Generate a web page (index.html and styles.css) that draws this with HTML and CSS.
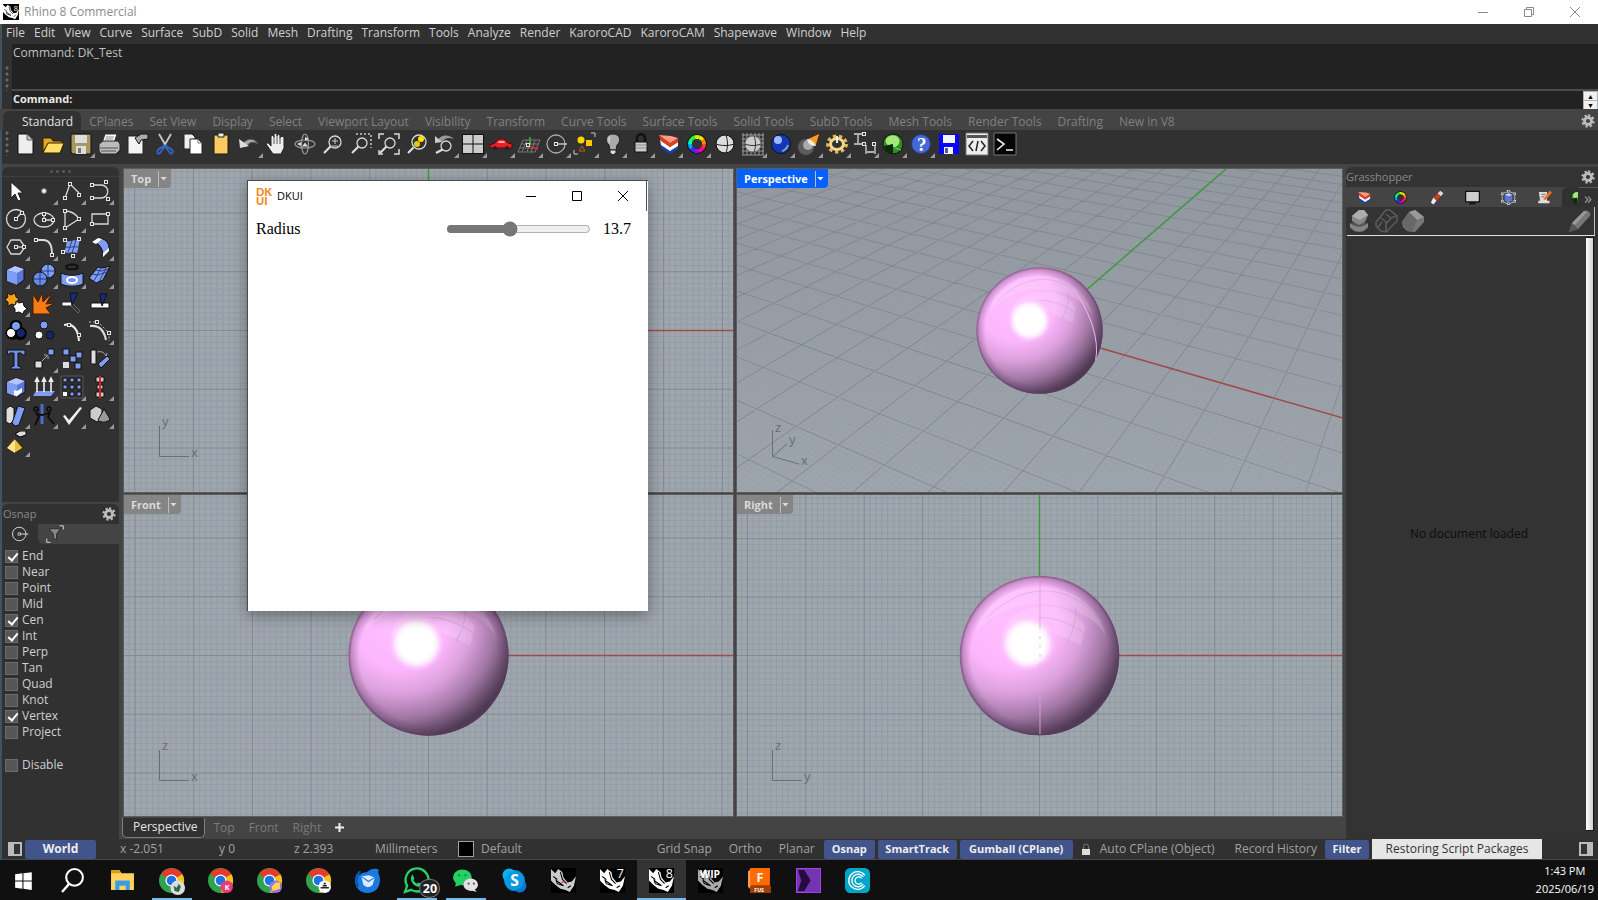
FILE: index.html
```html
<!DOCTYPE html>
<html lang="en">
<head>
    <meta charset="UTF-8">
    <meta name="viewport" content="width=device-width, initial-scale=1.0">
    <title>Rhino 8 Commercial</title>
    <link rel="stylesheet" href="styles.css">
</head>
<body>
    <header class="titlebar">
        <span class="app-icon" data-icon="rhino8"></span>
        <h1>Rhino 8 Commercial</h1>
        <div class="window-buttons">
            <button aria-label="Minimize"><svg width="12" height="12"><path d="M1 6.500h10"/></svg></button>
            <button aria-label="Restore"><svg width="12" height="12"><path d="M1.500 3.500h7v7h-7zM3.500 3.500v-2h7v7h-2"/></svg></button>
            <button aria-label="Close"><svg width="12" height="12"><path d="M1 1l10 10M11 1L1 11"/></svg></button>
        </div>
    </header>

    <nav class="menubar">
        <a href="#">File</a><a href="#">Edit</a><a href="#">View</a><a href="#">Curve</a><a href="#">Surface</a><a href="#">SubD</a><a href="#">Solid</a><a href="#">Mesh</a><a href="#">Drafting</a><a href="#">Transform</a><a href="#">Tools</a><a href="#">Analyze</a><a href="#">Render</a><a href="#">KaroroCAD</a><a href="#">KaroroCAM</a><a href="#">Shapewave</a><a href="#">Window</a><a href="#">Help</a>
    </nav>

    <section class="command">
        <div class="grip"></div>
        <div class="command-body">
            <div class="history">Command: DK_Test</div>
            <div class="prompt">
                <label for="command-input">Command:</label>
                <input type="text" id="command-input">
                <div class="spinner">
                    <button aria-label="Previous">&#9650;</button>
                    <button aria-label="Next">&#9660;</button>
                </div>
            </div>
        </div>
    </section>

    <section class="toolbars">
        <div class="toolbar-tabs">
            <a href="#" class="active">Standard</a><a href="#">CPlanes</a><a href="#">Set View</a><a href="#">Display</a><a href="#">Select</a><a href="#">Viewport Layout</a><a href="#">Visibility</a><a href="#">Transform</a><a href="#">Curve Tools</a><a href="#">Surface Tools</a><a href="#">Solid Tools</a><a href="#">SubD Tools</a><a href="#">Mesh Tools</a><a href="#">Render Tools</a><a href="#">Drafting</a><a href="#">New in V8</a>
            <button class="gear" aria-label="Toolbar options" data-icon="gear"></button>
        </div>
        <div class="toolbar">
            <div class="grip"></div>
            <div class="toolbar-icons" id="toolbar"></div>
        </div>
    </section>

    <main>
        <aside class="left-dock">
            <section class="panel tools">
                <div class="hgrip"><i></i><i></i><i></i><i></i></div>
                <div class="tool-grid" id="tools"></div>
            </section>
            <section class="panel osnap">
                <div class="panel-header">
                    <h2>Osnap</h2>
                    <button class="gear" aria-label="Osnap options" data-icon="gear"></button>
                </div>
                <div class="osnap-tabs">
                    <button class="active" aria-label="Object snaps" data-icon="osnap"></button>
                    <button aria-label="Selection filter" data-icon="filter"></button>
                </div>
                <div class="osnap-list">
                    <label><input type="checkbox" checked>End</label>
                    <label><input type="checkbox">Near</label>
                    <label><input type="checkbox">Point</label>
                    <label><input type="checkbox">Mid</label>
                    <label><input type="checkbox" checked>Cen</label>
                    <label><input type="checkbox" checked>Int</label>
                    <label><input type="checkbox">Perp</label>
                    <label><input type="checkbox">Tan</label>
                    <label><input type="checkbox">Quad</label>
                    <label><input type="checkbox">Knot</label>
                    <label><input type="checkbox" checked>Vertex</label>
                    <label><input type="checkbox">Project</label>
                    <label class="disable"><input type="checkbox">Disable</label>
                </div>
            </section>
        </aside>

        <section class="workspace">
            <div class="viewports">
                <div class="viewport" data-view="top" data-axes="xy"><button class="view-title">Top<i></i></button></div>
                <div class="viewport" data-view="perspective" data-axes="3d"><button class="view-title active">Perspective<i></i></button></div>
                <div class="viewport" data-view="front" data-axes="xz"><button class="view-title">Front<i></i></button></div>
                <div class="viewport" data-view="right" data-axes="yz"><button class="view-title">Right<i></i></button></div>
            </div>
            <nav class="view-tabs">
                <a href="#" class="active">Perspective</a><a href="#">Top</a><a href="#">Front</a><a href="#">Right</a>
                <button aria-label="New viewport"><svg width="9" height="9"><path d="M4.500 0v9M0 4.500h9" stroke="#eee" stroke-width="2"/></svg></button>
            </nav>
        </section>

        <aside class="right-dock">
            <div class="panel-header">
                <h2>Grasshopper</h2>
                <button class="gear" aria-label="Panel options" data-icon="gear"></button>
            </div>
            <div class="panel-tabs" id="panel-tabs"></div>
            <div class="gh-toolbar">
                <button aria-label="Bake" data-icon="ghBake"></button>
                <button aria-label="Wireframe" data-icon="ghWire"></button>
                <button aria-label="Shaded" data-icon="ghShade"></button>
                <button class="pencil" aria-label="Edit" data-icon="pencil"></button>
            </div>
            <div class="gh-body">
                <p>No document loaded</p>
                <div class="scrollbar"></div>
            </div>
        </aside>
    </main>

    <footer class="statusbar">
        <button class="side" aria-label="Left sidebar"><svg width="14" height="14"><path fill="#bbb" d="M0 0h14v14H0z"/><path fill="#333" d="M6 2h6v10H6z"/></svg></button>
        <button class="on world">World</button>
        <div class="coords"><span>x -2.051</span><span>y 0</span><span>z 2.393</span><span>Millimeters</span></div>
        <button class="layer"><i></i>Default</button>
        <div class="modes">
            <button>Grid Snap</button>
            <button>Ortho</button>
            <button>Planar</button>
            <button class="on osnap-mode">Osnap</button>
            <button class="on smart-mode">SmartTrack</button>
            <button class="on gumball-mode">Gumball (CPlane)</button>
            <svg class="lock" width="10" height="13"><path d="M2.500 6V3.500a2.500 2.500 0 0 1 5 0V6" fill="none" stroke="#777"/><path d="M1 6h8v6H1z" fill="#ddd"/></svg>
            <button class="cplane-mode">Auto CPlane (Object)</button>
            <button class="history-mode">Record History</button>
            <button class="on filter-mode">Filter</button>
            <button class="progress">Restoring Script Packages</button>
            <button class="side" aria-label="Right sidebar"><svg width="14" height="14"><path fill="#bbb" d="M0 0h14v14H0z"/><path fill="#333" d="M2 2h6v10H2z"/></svg></button>
        </div>
    </footer>

    <footer class="taskbar">
        <div class="task-icons" id="taskbar"></div>
        <div class="clock"><span>1:43 PM</span><span>2025/06/19</span></div>
    </footer>

    <section class="dialog">
        <div class="dialog-title">
            <div class="dk-logo"><span>DK</span><span>UI</span></div>
            <h2>DKUI</h2>
            <div class="window-buttons">
                <button aria-label="Minimize"><svg width="12" height="12"><path d="M1 6.500h10"/></svg></button>
                <button aria-label="Maximize"><svg width="12" height="12"><path d="M1.500 1.500h9v9h-9z"/></svg></button>
                <button aria-label="Close"><svg width="12" height="12"><path d="M1 1l10 10M11 1L1 11"/></svg></button>
            </div>
        </div>
        <div class="dialog-body">
            <label for="radius">Radius</label>
            <input type="range" id="radius" min="1" max="30" step="0.1" value="13.7">
            <output for="radius">13.7</output>
        </div>
    </section>

    <script src="script.js"></script>
</body>
</html>
```
FILE: styles.css
```css
* {
    box-sizing: border-box;
}
body {
    margin: 0;
    height: 100vh;
    display: flex;
    flex-direction: column;
    position: relative;
    overflow: hidden;
    background: #444444;
    color: #d0d0d0;
    font-family: "Open Sans", "Noto Sans", sans-serif;
    font-size: 12px;
    line-height: 16px;
}
h1, h2, p {
    margin: 0;
    font-size: inherit;
    font-weight: normal;
}
a {
    color: inherit;
    text-decoration: none;
    white-space: nowrap;
}
button {
    border: 0;
    padding: 0;
    background: none;
    color: inherit;
    font: inherit;
    white-space: nowrap;
}
svg {
    display: block;
}

/* title bar */
.titlebar {
    height: 24px;
    display: flex;
    align-items: center;
    background: #ffffff;
    color: #8c8c8c;
    padding-left: 3px;
}
.app-icon svg {
    width: 16px;
    height: 16px;
}
.titlebar h1 {
    margin-left: 5px;
}
.window-buttons {
    margin-left: auto;
    display: flex;
}
.window-buttons button {
    width: 46px;
    height: 24px;
    display: flex;
    align-items: center;
    justify-content: center;
}
.window-buttons path {
    fill: none;
    stroke: #8a8a8a;
}

/* menu */
.menubar {
    height: 20px;
    display: flex;
    align-items: flex-start;
    gap: 9px;
    padding: 1px 0 0 4px;
    background: #313131;
    border-left: 2px solid #43525f;
}

/* command line */
.command {
    height: 65px;
    display: flex;
    background: #313131;
    border-left: 2px solid #43525f;
}
.grip {
    width: 10px;
    background: radial-gradient(circle at 5px 3px, #696969 1px, transparent 2px) 0 21px / 10px 6px repeat-y;
    background-clip: content-box;
    padding: 21px 0 18px;
}
.command-body {
    flex: 1;
    display: flex;
    flex-direction: column;
    background: #222222;
}
.history {
    flex: 1;
    padding: 1px 0 0 1px;
    border-bottom: 2px solid #4c4c4c;
    color: #c0c0c0;
}
.prompt {
    height: 18px;
    display: flex;
    align-items: flex-start;
}
.prompt label {
    padding-left: 1px;
    font-weight: bold;
    font-size: 11px;
    color: #e8e8e8;
}
.prompt input {
    flex: 1;
    height: 18px;
    border: 0;
    outline: 0;
    background: none;
    color: #e8e8e8;
    font: inherit;
}
.spinner {
    width: 15px;
    display: flex;
    flex-direction: column;
    gap: 1px;
    background: #b0b0b0;
    padding: 1px;
}
.spinner button {
    height: 8px;
    font-size: 7px;
    line-height: 7px;
    color: #000000;
    background: #f0f0f0;
}

/* toolbars */
.toolbar-tabs {
    height: 21px;
    display: flex;
    align-items: flex-end;
    padding-left: 3px;
    background: #444444;
    color: #808080;
}
.toolbar-tabs a {
    height: 19px;
    padding: 3px 8px 0;
}
.toolbar-tabs .active {
    padding-left: 19px;
    background: #313131;
    border-radius: 6px 6px 0 0;
    color: #e0e0e0;
}
.gear {
    width: 14px;
    height: 19px;
    margin-left: auto;
    margin-right: 3px;
    display: flex;
    align-items: center;
}
.gear svg {
    width: 14px;
    height: 14px;
}
.toolbar {
    height: 34px;
    display: flex;
    background: #313131;
    border-left: 2px solid #43525f;
}
.toolbar .grip {
    width: 9px;
    padding: 0 0 8px;
    background-position: 0 0;
}
.toolbar-icons {
    display: flex;
}
.tool {
    position: relative;
    width: 28px;
    height: 28px;
    display: flex;
    align-items: center;
    justify-content: center;
}
.tool svg {
    width: 24px;
    height: 24px;
}
.flyout::after {
    content: "";
    position: absolute;
    right: 0;
    bottom: 0;
    width: 5px;
    height: 5px;
    background: #9a9a9a;
    clip-path: polygon(100% 0, 100% 100%, 0 100%);
}

/* docks */
main {
    flex: 1;
    min-height: 0;
    display: flex;
    border-left: 2px solid #43525f;
    background: #444444;
}
.left-dock {
    width: 117px;
    display: flex;
    flex-direction: column;
    gap: 2px;
    padding-top: 3px;
}
.panel {
    flex: 1;
    min-height: 0;
    background: #313131;
    border-radius: 6px 6px 0 0;
}
.hgrip {
    height: 10px;
    display: flex;
    justify-content: center;
    align-items: center;
    gap: 3px;
    border-bottom: 1px solid #3e3e3e;
}
.hgrip i {
    width: 3px;
    height: 3px;
    border-radius: 50%;
    background: #5a5a5a;
}
.tool-grid {
    display: grid;
    grid-template-columns: repeat(4, 28px);
}
.panel-header {
    height: 20px;
    display: flex;
    align-items: center;
    color: #8a8a8a;
    font-size: 11px;
}
.osnap .panel-header {
    padding-left: 1px;
}
.osnap-tabs {
    height: 20px;
    display: flex;
    background: #313131;
}
.osnap-tabs button {
    width: 36px;
    display: flex;
    align-items: center;
    justify-content: center;
}
.osnap-tabs button + button {
    flex: 1;
    justify-content: flex-start;
    padding-left: 8px;
    background: #444444;
    border-bottom-left-radius: 6px;
}
.osnap-tabs svg {
    width: 18px;
    height: 18px;
}
.osnap-list {
    padding: 4px 0 0 3px;
}
.osnap-list label {
    height: 16px;
    display: flex;
    align-items: center;
    gap: 4px;
}
.osnap-list .disable {
    margin-top: 17px;
}
.osnap-list input {
    appearance: none;
    width: 13px;
    height: 13px;
    margin: 0;
    border: 1px solid #6c6c6c;
    background: #565656;
}
.osnap-list input:checked::after {
    content: "";
    display: block;
    width: 4px;
    height: 8px;
    margin: 0 0 0 4px;
    border: solid #ffffff;
    border-width: 0 2px 2px 0;
    transform: rotate(40deg);
}

/* viewports */
.workspace {
    flex: 1;
    display: flex;
    flex-direction: column;
    padding: 5px 4px 0 5px;
}
.viewports {
    flex: 1;
    min-height: 0;
    display: grid;
    grid-template-columns: 609fr 605fr;
    grid-template-rows: 323fr 321fr;
    gap: 3px 4px;
}
.viewport {
    position: relative;
    overflow: hidden;
    outline: 1px solid #5c5c5c;
    background: #9ea6ae;
}
.viewport[data-view="perspective"] {
    background: linear-gradient(#939aa1, #9ea6ad);
}
.viewport .scene {
    position: absolute;
    inset: 0;
    width: 100%;
    height: 100%;
}
.viewport .axes {
    position: absolute;
    left: 30px;
    bottom: 20px;
}
.axes path {
    fill: none;
    stroke: #6e6e70;
}
.axes text {
    fill: #6c6c6e;
    font-size: 13px;
}
.view-title {
    position: absolute;
    z-index: 1;
    left: 0;
    top: 0;
    height: 19px;
    display: flex;
    align-items: center;
    gap: 7px;
    padding: 0 4px 0 7px;
    border-bottom-right-radius: 4px;
    background: #858585;
    color: #dadada;
    font-size: 11px;
    font-weight: bold;
}
.view-title.active {
    background: #0560ff;
    color: #ffffff;
}
.view-title i {
    height: 16px;
    padding: 6px 0 0 1px;
    border-left: 1px solid #bdbdbd;
}
.view-title i::before {
    content: "";
    display: block;
    width: 7px;
    height: 4px;
    background: currentColor;
    clip-path: polygon(0 0, 100% 0, 50% 100%);
}
.view-tabs {
    height: 23px;
    display: flex;
    align-items: center;
    color: #7a7a7a;
    margin-left: -2px;
}
.view-tabs a {
    padding-top: 1px;
    margin-right: 16px;
}
.view-tabs .active {
    height: 20px;
    margin-right: 8px;
    padding: 1px 7px 0 10px;
    border: 1px solid #808080;
    border-top: 0;
    border-radius: 0 0 5px 5px;
    background: #313131;
    color: #e4e4e4;
}
.view-tabs a:nth-child(n+2) {
    margin-right: 14px;
}

/* grasshopper panel */
.right-dock {
    width: 252px;
    margin-top: 3px;
    display: flex;
    flex-direction: column;
    background: #333333;
    border-radius: 6px 0 0 0;
}
.panel-tabs {
    height: 20px;
    display: flex;
    background: #444444;
}
.panel-tabs button {
    width: 36px;
    display: flex;
    align-items: center;
    justify-content: center;
}
.panel-tabs svg {
    width: 15px;
    height: 15px;
}
.panel-tabs .active {
    width: 16px;
    overflow: hidden;
    justify-content: flex-start;
    padding-left: 8px;
    background: #313131;
    border-radius: 6px 0 0 0;
}
.panel-tabs .active svg {
    flex: none;
}
.panel-tabs .more {
    flex: 1;
    background: #313131;
    border-top: 1px solid #555555;
    color: #a0a0a0;
    font-size: 16px;
}
.gh-toolbar {
    height: 29px;
    display: flex;
    align-items: center;
    gap: 3px;
    margin: 0 3px 0 1px;
    border-right: 1px solid #c0c0c0;
    border-bottom: 1px solid #e0e0e0;
}
.gh-toolbar svg {
    width: 24px;
    height: 24px;
}
.gh-toolbar .pencil {
    margin-left: auto;
    margin-right: 2px;
}
.gh-body {
    flex: 1;
    display: flex;
    align-items: stretch;
    color: #0c0c0c;
}
.gh-body p {
    flex: 1;
    display: flex;
    align-items: center;
    justify-content: center;
    padding: 0 0 8px 6px;
}
.scrollbar {
    width: 8px;
    margin: 1px 4px 8px 0;
    border: 1px solid #161616;
    border-left: 0;
    background: linear-gradient(90deg, #ffffff, #cfcfcf);
}

/* status bar */
.statusbar {
    height: 21px;
    display: flex;
    align-items: center;
    padding-left: 6px;
    background: #313131;
    border-left: 2px solid #43525f;
    border-bottom: 1px solid #484848;
    color: #a2a2a2;
    line-height: 18px;
}
.statusbar .on {
    height: 19px;
    border-radius: 2px;
    background: #41558c;
    color: #eeeeee;
    font-size: 11px;
    font-weight: bold;
}
.statusbar .world {
    width: 71px;
    margin-left: 3px;
    font-size: 12px;
}
.coords {
    display: grid;
    grid-template-columns: 99px 75px 81px 83px;
    margin-left: 24px;
}
.layer {
    display: flex;
    align-items: center;
    gap: 7px;
}
.layer i {
    width: 16px;
    height: 16px;
    border: 1px solid #a0a0a0;
    background: #000000;
}
.modes {
    margin-left: auto;
    display: flex;
    align-items: center;
    gap: 3px;
    padding-right: 5px;
}
.modes button:nth-child(-n+3) {
    margin-right: 14px;
}
.modes button:nth-child(3) {
    margin-right: 6px;
}
.osnap-mode {
    width: 51px;
}
.smart-mode {
    width: 79px;
}
.gumball-mode {
    width: 113px;
}
.lock {
    margin: 0 6px 0 5px;
}
.cplane-mode {
    margin-right: 17px;
}
.history-mode {
    margin-right: 5px;
}
.filter-mode {
    width: 44px;
}
.progress {
    width: 170px;
    height: 20px;
    margin-right: 34px;
    background: #e6e6e6;
    color: #333333;
}

/* taskbar */
.taskbar {
    height: 40px;
    display: flex;
    justify-content: space-between;
    background: #101010;
    color: #ffffff;
}
.task-icons {
    display: flex;
}
.task {
    width: 49px;
    height: 40px;
    display: flex;
    align-items: center;
    justify-content: center;
}
.task svg {
    width: 25px;
    height: 25px;
    overflow: visible;
}
.task.running {
    background: linear-gradient(#76b9ed, #76b9ed) center bottom / 40px 2px no-repeat;
}
.task.current {
    background: linear-gradient(#76b9ed, #76b9ed) center bottom / 100% 2px no-repeat, #333333;
}
.clock {
    display: flex;
    flex-direction: column;
    align-items: center;
    gap: 2px;
    padding: 3px 4px 0 0;
    font-size: 11px;
}

/* DKUI window */
.dialog {
    position: absolute;
    left: 247px;
    top: 180px;
    width: 401px;
    height: 431px;
    background: #ffffff;
    border: solid #4c4c4c;
    border-width: 1px 0 0 1px;
    box-shadow: 0 4px 14px rgba(0, 0, 0, 0.35);
    color: #000000;
}
.dialog-title {
    height: 30px;
    display: flex;
    align-items: center;
    padding-left: 8px;
    margin-right: 1px;
    border-right: 1px solid #4c4c4c;
}
.dialog-title h2 {
    margin-left: 5px;
    font-size: 11px;
}
.dialog .window-buttons path {
    stroke: #000000;
}
.dk-logo {
    width: 16px;
    display: flex;
    flex-direction: column;
    color: #ee8a1d;
    font: 900 11px/9px Lato, sans-serif;
}
.dialog-body {
    display: flex;
    align-items: center;
    padding: 8px;
    font: 16px/20px "Liberation Serif", serif;
}
.dialog-body input {
    width: 145px;
    height: 16px;
    margin: 0 12px 0 auto;
    accent-color: #767676;
}
.dialog-body output {
    width: 37px;
}
```
FILE: script.js
```js
// shared look for thin light icon strokes
const L = 'fill="none" stroke="#d8d8d8" stroke-width="1.3"';
const svg = (body) => `<svg viewBox="0 0 24 24">${body}</svg>`;
const pts = (...list) => list.map(([x, y]) => `<rect x="${x - 1.5}" y="${y - 1.5}" width="3" height="3" fill="#333" stroke="#e4e4e4"/>`).join('');
const ball = (x, y, r, c, edge = '#111') => `<circle cx="${x}" cy="${y}" r="${r}" fill="${c}" stroke="${edge}"/>`;
const rhino = (extra, c = '#fff') => `<path d="M0 0h24v24H0z" fill="#000"/><path fill="${c}" d="M0 1l4 4 3-4 4 3 1 5 4 5 4-1 4-5-2 9-4 6-4-2-5-1-5-4-4-4z"/><path d="M5 12l7 5-6-2zM16 19l3-2M9 4l2 7 4 4M2 8l4 3" fill="none" stroke="#000" stroke-width="1"/>${extra}`;
const chrome = (badge) => `<circle cx="12" cy="12" r="12" fill="#31a350"/><path d="M12 12L2 6A12 12 0 0 1 22.500 6z" fill="#e33b2e"/><path d="M12 12l10.500-6A12 12 0 0 1 13 24z" fill="#fbc116"/><circle cx="12" cy="12" r="5.800" fill="#fff"/><circle cx="12" cy="12" r="4.600" fill="#1a73e8"/>${badge}`;

function wheel() {
    const colors = ['#f33', '#f0a', '#a0f', '#33f', '#0af', '#0fa', '#3e3', '#bf0', '#fd0', '#f80'];
    return '<circle cx="12" cy="12" r="10" fill="#111"/>' + colors.map((c, i) =>
        `<circle cx="12" cy="12" r="7" fill="none" stroke="${c}" stroke-width="4" pathLength="100" stroke-dasharray="10.500 89.500" stroke-dashoffset="${-i * 10}"/>`).join('') +
        '<circle cx="12" cy="12" r="5" fill="#333"/>';
}

const lens = (x = 14, y = 10, r = 6) => `<circle cx="${x}" cy="${y}" r="${r}" ${L}/><path d="M${x - r + 1.5} ${y + r - 1.5}L3 21" stroke="#ddd" stroke-width="2.200"/>`;
const grid = (d) => `<path d="${d}" fill="none" stroke="#1a2866" stroke-width=".8"/>`;
const layers = '<path d="M4 11l9 7 8-5v4l-8 5-9-6z" fill="#1b3fae"/><path d="M3 8l10 7 8-5v4l-8 5-9-6z" fill="#fff"/><path d="M2 3l2 6 9 6 8-5V6l-8 5z" fill="#e33d22"/><path d="M2 3l12 1 7 2-8 5z" fill="#ff9b80"/>';

const icons = {
    rhino8: svg(rhino('<text x="16" y="10" font-size="11" fill="#fff">8</text>')),
    gear: svg('<path fill="none" stroke="#bbb" stroke-width="5" stroke-dasharray="3.500 3.570" d="M12 3a9 9 0 1 1 0 18 9 9 0 1 1 0-18"/><circle cx="12" cy="12" r="6" fill="none" stroke="#bbb" stroke-width="5"/>'),
    osnap: svg(`<circle cx="11" cy="12" r="9" ${L}/><path d="M11 12h12" ${L}/>${pts([11, 12])}`),
    filter: svg(`<path d="M4 5h15l-5 7v8l-4-3v-5z" fill="#888" stroke="#222"/><path d="M18 1h5v5M1 18v5h5" ${L}/>`),
    ghBake: svg('<path d="M3 15l9-4 9 4v4l-5 4H8l-5-4z" fill="#555"/><path d="M3 14c6 5 12 5 18 0v4c-6 6-12 6-18 0z" fill="#858585"/><path d="M5 7l7-6h5l4 5-3 7-6 3-7-4z" fill="#868686"/><path d="M5 7l7-6h5l4 5-8 5z" fill="#adadad"/>'),
    ghWire: svg('<path d="M2 13L12 1h4l7 6v5L12 23l-5-1-5-5zM7 9l5 4v9M12 5l5 4-5 6M8 13l-4 5M17 9l5-2" fill="none" stroke="#5c5c5c" stroke-width="1.500"/>'),
    ghShade: svg('<path d="M1 13L8 3l6-2 9 7v5l-9 10-8-1-4-4z" fill="#777"/><path d="M8 3l6-2 9 7-7 3z" fill="#999"/><path d="M1 13L8 3l8 8-5 12-5-1z" fill="#686868"/>'),
    pencil: svg('<path d="M1 23l3-9L16 2c3-2 8 2 6 5L10 20z" fill="#777"/><path d="M4 14L16 2l3 1L7 16z" fill="#999"/><path d="M1 23l3-9 6 6z" fill="#555"/>')
};

const car = '<path d="M1 13l5-2 3-4h6l4 4 4 1v4H1z" fill="#e8202a" stroke="#600"/><path d="M9 11l1-2h5l1 2z" fill="#f9b0b0"/><circle cx="6" cy="16" r="2" fill="#222"/><circle cx="18" cy="16" r="2" fill="#222"/>';

// [label, drawing, has flyout]
const toolbar = [
    ['New', '<path d="M5 2h9l6 6v14H5z" fill="#eee" stroke="#111"/><path d="M14 2v6h6" fill="#bbb" stroke="#666"/>'],
    ['Open', '<path d="M2 20V6h8l2 3h9v3H7z" fill="#e0a920" stroke="#332200"/><path d="M2 21l5-10h16l-4 10z" fill="#ffdf66" stroke="#332200"/>'],
    ['Save', '<path d="M2 2h20v20H4l-2-2z" fill="#a59a5c" stroke="#111"/><path d="M6 3h12v8H6zM7 14h10v8H7z" fill="#ddd"/><path d="M9 16h3v5H9z" fill="#777"/>', 1],
    ['Print', '<path d="M8 2h12l-3 9H5z" fill="#fff" stroke="#333"/><path d="M2 12l4-3h15l2 3v6l-4 4H4l-2-3z" fill="#bbb" stroke="#222"/><path d="M3 16h18M4 19h15" stroke="#555"/><path d="M9 5h8M8 7h8" stroke="#888"/>'],
    ['Properties', '<path d="M3 4h12l3 3v15H3z" fill="#f3f3f3" stroke="#222"/><path d="M10 6l6-4h7v5l-7 1-2 4z" fill="#aaa" stroke="#111"/>'],
    ['Cut', '<path d="M6 2l7 12M18 2l-7 12" stroke="#ccc" stroke-width="1.800"/><path d="M13 13l-6 8c-2 2-4-1-2-3 1-2 4-2 6-4M11 13l6 8c2 2 4-1 2-3-1-2-4-2-6-4" fill="none" stroke="#2f66c8" stroke-width="1.800"/>'],
    ['Copy', '<path d="M3 2h8l3 3v12H3z" fill="#eee" stroke="#222"/><path d="M9 7h8l4 4v11H9z" fill="#fff" stroke="#222"/><path d="M17 7v4h4" fill="none" stroke="#777"/>'],
    ['Paste', '<path d="M5 3h14v19H5z" fill="#f8cc62" stroke="#221800"/><path d="M9 1h6v4H9z" fill="#eee" stroke="#222"/>'],
    ['Undo', '<path d="M5 13c4-7 12-8 16-1-5-3-9-2-12 3z" fill="#aaa" stroke="#555"/><path d="M2 7l1 9 9-2z" fill="#ddd"/>', 1],
    ['Pan', '<path d="M8 22l-7-10c1-2 3-1 5 2V5c0-2 3-2 3 0V3c0-2 3-2 3 0v1c0-2 3-2 3 0v2c0-2 4-2 4 0v10l-3 6z" fill="#eee" stroke="#222"/><path d="M9 5v7M12 4v8M15 6v6" stroke="#555"/>'],
    ['Rotate', '<ellipse cx="12" cy="12" rx="10" ry="4" fill="none" stroke="#999" stroke-width="1.200"/><ellipse cx="12" cy="12" rx="3.500" ry="10" fill="none" stroke="#999" stroke-width="1.200"/><path d="M9 14.500h6l-3-4zM12 5l4 2-4 2zM4 12l4-2v4z" fill="#ddd"/>'],
    ['Zoom', lens() + '<path d="M11 9h6M14 6v6M11 14h6" stroke="#ccc"/>'],
    ['Zoom Window', lens(13, 11, 5) + '<path d="M7 2h15v14" fill="none" stroke="#ccc" stroke-width="1.500" stroke-dasharray="2 2"/>'],
    ['Zoom Extents', lens(13, 11, 5) + '<path d="M2 7V2h5M17 2h5v5M22 17v5h-5M2 18v4h4" fill="none" stroke="#ddd" stroke-width="1.500"/>'],
    ['Zoom Selected', lens(14, 10, 7) + '<circle cx="16" cy="7" r="3" fill="#ffe000"/><circle cx="12" cy="12" r="3" fill="#e8c800"/>'],
    ['Undo View', lens(13, 14, 5) + '<path d="M4 9c4-7 12-7 17-2-6-2-9-1-12 3z" fill="#999"/><path d="M2 4v7l7-1z" fill="#ccc"/>', 1],
    ['4 View', '<path d="M1 2h22v20H1z" fill="#111"/><path d="M2 3h9.500v8.500H2zM12.500 3H22v8.500h-9.500zM2 12.500h9.500V21H2zM12.500 12.500H22V21h-9.500z" fill="#ccc"/>', 1],
    ['Named View', car, 1],
    ['CPlane', '<path d="M6 8h17l-5 12H1zM4 12h17M3 16h17M10 8L5 20M14 8l-4 12M18 8l-4 12" fill="none" stroke="#777"/><path d="M12 14l9 3" stroke="#e22" stroke-width="1.500"/><path d="M13 13V5" stroke="#3b3" stroke-width="1.500"/>' + pts([11, 13]), 1],
    ['Object Snap', `<circle cx="11" cy="12" r="9" fill="none" stroke="#aaa" stroke-width="1.300"/><path d="M11 12h11" ${L}/>` + pts([11, 12]), 1],
    ['Select', '<circle cx="8" cy="8" r="3.500" fill="#ffd400"/><path d="M13 8h6v6h-6z" fill="#ffc800"/><path d="M6 19l3-5 3 5z" fill="none" stroke="#b60"/><path d="M18 1h4v4M1 18v4h4" fill="none" stroke="#ccc"/>', 1],
    ['Hide', '<path d="M12 2c-8 0-8 8-4 11l1 5h6l1-5c4-3 4-11-4-11z" fill="#aaa" stroke="#222"/><path d="M9 18h6v3l-3 2-3-2z" fill="#ddd" stroke="#222"/><path d="M9 5c-2 3-1 5 0 6" stroke="#eee" fill="none"/>', 1],
    ['Lock', '<path d="M8 10V6c0-5 8-5 8 0v4" fill="none" stroke="#111" stroke-width="2.500"/><path d="M6 10h12v10H6z" fill="#ccc" stroke="#111"/><path d="M7 13h10M7 16h10" stroke="#888"/>', 1],
    ['Layers', layers, 1],
    ['Display Color', wheel(), 1],
    ['Shade', ball(12, 12, 9, '#ddd') + '<path d="M13 3c2 5 2 13 0 18M3 12c5 2 13 2 18 0" fill="none" stroke="#222"/>'],
    ['Render Preview', '<path d="M2 1v22M6 1v22M10 1v22M14 1v22M18 1v22M22 1v22M1 3h22M1 7h22M1 11h22M1 15h22M1 19h22M1 23h22" stroke="#999" fill="none"/>' + ball(12, 12, 8, '#ccc', '#777') + '<path d="M13 4c2 4 2 12 0 16M4 12c5 2 11 2 16 0" fill="none" stroke="#333"/>', 1],
    ['Render', ball(12, 12, 9.5, '#1437b8') + '<circle cx="9" cy="8" r="4" fill="#9db8ff"/><path d="M13 19c4-1 5-3 6-6" stroke="#7ab" stroke-width="2" fill="none"/>', 1],
    ['Spotlight', '<circle cx="9" cy="15" r="8" fill="#5c5c5c"/><circle cx="11" cy="13" r="5" fill="#aaa"/><path d="M10 7l13-6-4 13z" fill="#f79a2a" stroke="#420"/><path d="M10 7c4 0 7 3 9 7-5 0-8-2-9-7z" fill="#eee"/>', 1],
    ['Options', '<ellipse cx="12" cy="12" rx="9" ry="7.500" fill="none" stroke="#e3b85a" stroke-width="4" stroke-dasharray="3.200 2.600"/><ellipse cx="12" cy="12" rx="6.500" ry="5.500" fill="none" stroke="#f3d58c" stroke-width="3"/><path d="M12 4v7" stroke="#eee" stroke-width="2"/>', 1],
    ['Dimension', `<path d="M1 2h9M1 12h9M5 3v8M13 22v-9M22 22v-9M14 20h7" ${L}/>` + pts([11, 2], [11, 12], [21, 12]), 1],
    ['Grasshopper', ball(12, 12, 10, '#2f8f25') + '<path d="M5 7c3-5 11-5 13 0 2 5-3 9-6 8-3 0-9-3-7-8z" fill="#a6e67a"/><path d="M3 14l9-2v10c-5 0-8-3-9-8z" fill="#0b2b0b"/><path d="M14 16l6 2" stroke="#6d5"/>', 1],
    ['Help', ball(12, 12, 9.5, '#4667d6', '#223a8a') + '<text x="8" y="19" font-size="19" font-weight="bold" font-family="Liberation Serif" fill="#fff">?</text>', 1],
    ['Save Script', '<path d="M2 2h20v20H2z" fill="#0505ff"/><path d="M6 3h12v8H6zM7 15h9v7H7z" fill="#f4f4f4"/><path d="M8 16h3v5H8z" fill="#55a"/>'],
    ['Script Editor', '<path d="M1 1h22v22H1z" fill="#eee" stroke="#777"/><path d="M2 3h20v3H2z" fill="#555"/><path d="M8 9l-4 5 4 5M16 9l4 5-4 5M13 9l-2 10" fill="none" stroke="#222" stroke-width="1.500"/>'],
    ['Terminal', '<path d="M1 1h22v22H1z" fill="#050505" stroke="#777"/><path d="M4 7l7 5-7 6M13 18h7" fill="none" stroke="#eee" stroke-width="1.600"/>']
];

const B = '#7f9df5';
const cube = (x, y) => `<rect x="${x}" y="${y}" width="6" height="6" fill="${B}" stroke="#111"/>`;

const tools = [
    ['Select', '<path d="M7 3v16l4-4 3 7 3-1-3-7h5z" fill="#fff" stroke="#222"/>'],
    ['Point', '<circle cx="12" cy="12" r="2.500" fill="#eee" stroke="#777"/>', 1],
    ['Polyline', `<path d="M5 19L10 5l9 9" ${L}/>` + pts([5, 19], [10, 5], [19, 16]), 1],
    ['Curve', `<path d="M5 6h8c9 0 9 13 0 13H5" ${L}/>` + pts([4, 6], [18, 3], [4, 19], [20, 20]), 1],
    ['Circle', `<circle cx="12" cy="12" r="9.500" ${L}/><path d="M12 12l6-7" ${L}/>` + pts([12, 12], [18, 6]), 1],
    ['Ellipse', `<ellipse cx="12" cy="13" rx="10" ry="7" ${L}/><path d="M12 13h9M12 13V6" ${L}/>` + pts([12, 13], [21, 13], [12, 7]), 1],
    ['Arc', `<path d="M5 21V4c6 0 11 3 14 8L5 21" ${L}/>` + pts([5, 4], [19, 12], [5, 21]), 1],
    ['Rectangle', `<path d="M4 7h16v10H4z" ${L}/>` + pts([4, 17], [20, 7]), 1],
    ['Polygon', `<path d="M3 12l4-7h9l5 7-5 7H7z" ${L}/><path d="M12 12h8" ${L}/>` + pts([12, 12], [20, 12]), 1],
    ['Fillet', '<path d="M3 5h8c6 0 9 4 9 14" fill="none" stroke="#ddd" stroke-width="1.800"/>' + pts([4, 5], [20, 20]), 1],
    ['Surface', `<path d="M7 6c5 1 8-2 13-1-2 5-1 8-3 13-4-2-8 1-13-1 2-4 2-7 3-11z" fill="${B}"/>` + grid('M5 12c5 1 8-1 13 0M12 6l-4 11M16 5l-4 13') + pts([5, 5], [19, 4], [3, 17], [13, 21]), 1],
    ['Sweep', `<path d="M4 7l6-4c7 0 12 5 11 13l-6 5c0-7-3-13-11-14z" fill="${B}" stroke="#111"/><path d="M4 7l6-4 4 1-6 5zM21 13v3l-6 6v-4z" fill="#fff"/>`, 1],
    ['Box', `<path d="M3 7l8-4 9 3v11l-7 5-10-4z" fill="#5978dc" stroke="#111"/><path d="M3 7l8-4 9 3-7 4z" fill="#b5c5ff"/><path d="M3 7l10 3v12L3 18z" fill="${B}"/>`, 1],
    ['Boolean', ball(16, 8, 7, B) + ball(8, 16, 7, '#6b89e8') + grid('M9 8h14M16 1v14M1 16h13M8 9v14'), 1],
    ['Project', `<ellipse cx="12" cy="4" rx="6" ry="2.500" fill="none" stroke="#111" stroke-width="2"/><path d="M1 10c7 3 15 3 22 0v11c-7 3-15 3-22 0z" fill="${B}" stroke="#111"/><ellipse cx="12" cy="17" rx="5" ry="3" fill="#7896ee" stroke="#fff" stroke-width="2"/>`, 1],
    ['Mesh', `<path d="M1 15L10 4l5 1 7-2-7 14-7 3z" fill="${B}" stroke="#111"/>` + grid('M4 11l6 1 8-3M8 7l5 1 7-2M6 18l7-13M11 19l7-14'), 1],
    ['Explode', '<path d="M3 2l4 2 4-2 1 4 3 2-3 3v4l-4-2-4 2v-4L1 9l3-3z" fill="#f4a020" stroke="#221500"/><path d="M12 10l3 2 4-1 1 4 3 3-3 2-1 3-4-2-4 1v-4l-2-3 3-2z" fill="#fff" stroke="#111"/>', 1],
    ['Burst', '<path d="M1 23V3l5 8 4-9 1 9 9-9-6 11 9-1-9 5 5 6z" fill="#f57b14" stroke="#4a1c00"/>'],
    ['Trim', '<path d="M2 11h10v4H2z" fill="#fff" stroke="#222"/><path d="M12 12l8 8-2 2-7-7" fill="none" stroke="#666"/><path d="M10 2h8l-6 12z" fill="#122c88" stroke="#111"/>'],
    ['Split', '<path d="M3 12h18v5H3z" fill="#fff" stroke="#111"/><path d="M12 3h7l-5 12z" fill="#122c88" stroke="#111"/>'],
    ['Group', '<path d="M12 1c4 0 7 3 6 7 5 2 6 7 3 11-3 3-7 2-9 1-3 1-7 1-9-2-3-4-1-8 3-10-1-4 2-7 6-7z" fill="#000"/>' + ball(12, 7, 4.5, B, '#000') + ball(7, 14, 4.5, '#fff', '#000') + ball(17, 14, 4.5, '#15246c', '#000'), 1],
    ['Ungroup', ball(12, 6, 4, B) + ball(7, 16, 4, '#fff') + ball(18, 16, 4, '#15246c')],
    ['Edit Points', '<path d="M4 6c9-2 14 4 15 16" fill="none" stroke="#eee" stroke-width="2"/>' + pts([9, 6], [19, 16])],
    ['Control Points', '<path d="M2 7c9-1 14 4 16 14" fill="none" stroke="#ddd" stroke-width="2"/><path d="M1 3h9l11 11v8" fill="none" stroke="#bbb" stroke-dasharray="2 2"/>' + pts([9, 3], [21, 14]), 1],
    ['Text', '<path d="M3 3h18v5h-2l-2-2h-3v13l3 1v2H7v-2l3-1V6H6L4 8z" fill="#6f8fe8" stroke="#111"/>'],
    ['Move', '<path d="M9 15l7-7M12 8h4v4" fill="none" stroke="#aaa"/>' + cube(16, 2) + '<path d="M3 14h7v7H3z" fill="#ddd" stroke="#111"/>', 1],
    ['Copy', cube(3, 2) + cube(16, 5) + cube(10, 9) + cube(15, 16) + '<path d="M3 15h6v6H3z" fill="#ddd"/>'],
    ['Rotate', `<path d="M3 3h5v14H3z" fill="#ddd" stroke="#111"/><path d="M10 17L19 9l3 3-9 9z" fill="${B}" stroke="#111"/><path d="M9 5c4-1 7 0 9 4l1-3" fill="none" stroke="#aaa"/>`],
    ['Solid Edit', `<path d="M3 7l9-4 9 3v11l-8 5-10-4z" fill="#5978dc" stroke="#111"/><path d="M3 7l9-4 9 3-8 4z" fill="#b5c5ff"/><path d="M3 7l10 3v12L3 18z" fill="${B}"/><path d="M10 15l3 1 5-3v4l-5 4-3-1z" fill="#fff"/>`, 1],
    ['Extrude', `<path d="M4 16h19l-4 5H1z" fill="${B}"/><path d="M5 17V5M12 17V5M19 17V5M3 7l2-4 2 4M10 7l2-4 2 4M17 7l2-4 2 4" fill="none" stroke="#eee" stroke-width="1.600"/>`, 1],
    ['Array', '<path d="M3 3h4v4H3zM10 3h4v4h-4zM17 3h4v4h-4zM3 10h4v4H3zM10 10h4v4h-4zM17 10h4v4h-4zM10 17h4v4h-4zM17 17h4v4h-4z" fill="#7f9df5" stroke="#111"/><path d="M3 17h4v4H3z" fill="#fff"/><path d="M1 1h22v22H1z" fill="none" stroke="#555"/>', 1],
    ['Align', '<path d="M8 2h8v5H8zM9 10h6v4H9zM8 17h8v5H8z" fill="#ccc" stroke="#111"/><path d="M12 1v22" stroke="#d22" stroke-width="2"/>', 1],
    ['Analyze', `<path d="M2 6l4-3 4 2v12l-4 4-4-2z" fill="#ddd" stroke="#111"/><path d="M8 20L14 3l7 2-6 17-4 1z" fill="${B}" stroke="#111"/>`, 1],
    ['Skeleton', '<path d="M10 1v20" stroke="#4d6cc8" stroke-width="3"/><circle cx="4" cy="6" r="2" fill="none" stroke="#0c0c0c" stroke-width="1.500"/><circle cx="17" cy="6" r="2" fill="none" stroke="#0c0c0c" stroke-width="1.500"/><path d="M4 9l3 5-4 8M18 9l-2 5 6 7M4 11l6 1 7-2" fill="none" stroke="#0c0c0c" stroke-width="1.800"/>', 1],
    ['Check', '<path d="M3 13l2-1 4 5L20 4l2 1L9 22z" fill="#eee"/>', 1],
    ['Solids', '<path d="M2 7l6-4 6 3v9l-5 4-7-4z" fill="#ccc" stroke="#111"/><path d="M10 17l6-11 6 10c-3 4-9 4-12 1z" fill="#999" stroke="#111"/>', 1],
    ['Pyramid', '<path d="M3 17L11 8l8 9-8 5z" fill="#e8bd45" stroke="#332200"/><path d="M3 17L11 8v14z" fill="#ffe28a"/><path d="M11 3l5-3h6v4l-6 2z" fill="#ddd" stroke="#000"/>', 1]
];

const panels = [
    ['Layers', layers],
    ['Display', wheel()],
    ['Materials', '<path d="M3 20l4-8 5 5-5 6z" fill="#eee"/><path d="M8 11l6-6 5 5-7 7z" fill="#d33a20"/><path d="M14 5l4-4 5 4-4 5z" fill="#ddd"/>'],
    ['Monitor', '<path d="M1 2h22v17H1z" fill="#ccc" stroke="#111" stroke-width="2"/><path d="M7 20h10v3H7z" fill="#111"/>'],
    ['Properties', `<path d="M2 6l10-4 10 4v12l-10 5-10-5z" fill="none" stroke="#bbb" stroke-width="1.500"/><path d="M6 7l7-2 5 3v9l-6 3-6-3z" fill="#5877d8"/><path d="M6 7l7-2 5 3-6 2z" fill="#c4d0ff"/>` + pts([2, 6], [12, 2], [22, 6], [2, 18], [12, 22], [22, 18])],
    ['Notes', '<path d="M3 3h13v14h4v4H2v-4h3z" fill="#ddd"/><path d="M7 7h7M7 11h5" stroke="#333"/><path d="M10 15L20 1l4 3-10 12z" fill="#f2701d"/>']
];

const T = 'font-family="Open Sans" font-weight="bold" fill="#fff"';
const taskbar = [
    ['Start', '<path d="M3 6l7-1v7H3zM11 5l8-1v8h-8zM3 13h7v7l-7-1zM11 13h8v8l-8-1z" fill="#fff"/>'],
    ['Search', '<circle cx="13" cy="9" r="8" fill="none" stroke="#fff" stroke-width="2"/><path d="M8 15l-7 8" stroke="#fff" stroke-width="2.200"/>'],
    ['Explorer', '<path d="M1 2h8l2 3h12v16H1z" fill="#ffd35c"/><path d="M1 2h8l1 3H1z" fill="#d99a18"/><path d="M5 21v-9h14v9h-4v-4H9v4z" fill="#3a9be8"/>'],
    ['Chrome 1', chrome('<circle cx="18" cy="19" r="7" fill="#ddd"/><path d="M14 17l3 2 2-4 2 3-2 5-4-1z" fill="#286848"/>'), 'running'],
    ['Chrome 2', chrome(`<circle cx="18" cy="18" r="6" fill="#e83b7c"/><text x="16" y="21" font-size="7" ${T}>K</text>`)],
    ['Chrome 3', chrome('<circle cx="18" cy="18" r="6" fill="#9b72e8"/><path d="M14 18l4-4h4v6l-7 2z" fill="#ffd74a"/>')],
    ['Chrome 4', chrome('<circle cx="18" cy="18" r="6" fill="#fff"/><path d="M14 19h8M17 15h2M16 17h4" stroke="#222" stroke-width="1.500"/>')],
    ['Thunderbird', '<path d="M11 4c5-4 10-4 12-2-2 2 1 5 1 9 0 8-5 13-12 13S0 19 0 12c0-5 2-7 4-9v4c2-2 4-3 7-3z" fill="#1b79e2"/><path d="M5 3c-5 6-4 12-2 15" stroke="#0c50ac" stroke-width="2" fill="none"/><path d="M6 8l7-1 6 2-2 7c-3 3-6 3-9 0z" fill="#d8ebff"/><path d="M6 8l7 5 6-4" stroke="#1b79e2" fill="none"/>'],
    ['WhatsApp', `<path d="M1 23l2-6A11 11 0 1 1 7 21z" fill="#0e0e0e" stroke="#25d366" stroke-width="2.200"/><path d="M8 6l2 4-1 2 3 3 2-1 4 2c-5 6-15-3-10-10z" fill="#25d366"/><rect x="15" y="11" width="19" height="17" rx="8" fill="#222" stroke="#777"/><text x="18" y="24" font-size="12" ${T}>20</text>`, 'running'],
    ['WeChat', '<ellipse cx="9" cy="9" rx="9" ry="7.500" fill="#25cf62"/><path d="M3 13l-1 5 6-2z" fill="#25cf62"/><ellipse cx="17" cy="16" rx="7" ry="6" fill="#e2e2e2"/><path d="M20 20l3 3-7-2z" fill="#e2e2e2"/><circle cx="6" cy="7" r="1" fill="#075"/><circle cx="12" cy="7" r="1" fill="#075"/><circle cx="15" cy="15" r="1" fill="#555"/><circle cx="20" cy="15" r="1" fill="#555"/>', 'running'],
    ['Skype', `<circle cx="12" cy="12" r="10" fill="#0a93e0"/><circle cx="7" cy="7" r="6.500" fill="#0cb0ef"/><circle cx="17" cy="17" r="6.500" fill="#0878d0"/><circle cx="12" cy="12" r="9" fill="#0b98e3"/><text x="8" y="17" font-size="15" ${T}>S</text>`],
    ['Rhino', rhino('<path d="M10 14l3-1" stroke="#e22"/>', '#ccc')],
    ['Rhino 7', rhino('<text x="16" y="10" font-size="12" fill="#fff">7</text>')],
    ['Rhino 8', rhino('<text x="16" y="10" font-size="12" fill="#fff">8</text>'), 'current'],
    ['Rhino WIP', rhino(`<text x="2" y="10" font-size="10" ${T}>WIP</text>`, '#aaa')],
    ['Fusion', `<path d="M1 3l3-2v20l-3-3z" fill="#ffa060"/><path d="M3 0h19v17H3z" fill="#ff6b00"/><path d="M3 17h20v7H3z" fill="#a33e00"/><text x="9" y="13" font-size="12" ${T}>F</text><text x="7" y="23" font-size="5" ${T}>FUS</text>`],
    ['Photon', '<path d="M.5.5h23v23H.5z" fill="#7433b0" stroke="#a044e8"/><path d="M2 2h6l6 10-6 10H2l3-10z" fill="#250c40"/>'],
    ['Cura', '<rect width="24" height="24" rx="5" fill="#00a5c8"/><path d="M19 7a8.500 8.500 0 1 0 0 10M17.500 8.500a6 6 0 1 0 0 7M16 10a3.500 3.500 0 1 0 0 4" fill="none" stroke="#fff" stroke-width="1.300"/>']
];

function addButtons(id, items) {
    const box = document.getElementById(id);
    items.forEach(([name, body, extra]) => {
        const b = document.createElement('button');
        b.setAttribute('aria-label', name);
        b.className = id === 'taskbar' ? 'task ' + (extra || '') : id === 'panel-tabs' ? '' : 'tool' + (extra ? ' flyout' : '');
        b.innerHTML = svg(body);
        box.appendChild(b);
    });
}

addButtons('toolbar', toolbar);
addButtons('tools', tools);
addButtons('panel-tabs', panels);
addButtons('taskbar', taskbar);
document.getElementById('panel-tabs').insertAdjacentHTML('beforeend',
    `<button class="active" aria-label="Grasshopper">${svg(toolbar[31][1])}</button><button class="more">»</button>`);
document.querySelectorAll('[data-icon]').forEach((el) => {
    el.innerHTML = icons[el.dataset.icon];
});

// ---- viewports: origin of the world is the middle of every scene ----
const UNIT = 5.86;

function orthoGrid() {
    let minor = '', major = '';
    for (let i = -100; i <= 100; i++) {
        const p = (i * UNIT).toFixed(1);
        const d = `M${p} -600V600M-600 ${p}H600`;
        if (i % 10) minor += d; else major += d;
    }
    return `<path d="${minor}" stroke="#8b929b" stroke-opacity=".5"/><path d="${major}" stroke="#7c808a" stroke-opacity=".75"/>`;
}

// camera: 30 degrees round, 30 degrees up, 50mm lens
const CAM = { f: 672, d: 146, near: 25 };
const S = 0.5, C = Math.sqrt(3) / 2;
const depth = (x, y) => CAM.d + (C * y - S * x) * C;
function project(x, y) {
    const k = CAM.f / depth(x, y);
    return `${((C * x + S * y) * k).toFixed(1)} ${(-(C * y - S * x) * S * k).toFixed(1)}`;
}
function segment(x1, y1, x2, y2) {
    const a = depth(x1, y1), b = depth(x2, y2);
    if (a < CAM.near && b < CAM.near) return '';
    const t = (CAM.near - a) / (b - a);
    const cx = x1 + (x2 - x1) * t, cy = y1 + (y2 - y1) * t;
    if (a < CAM.near) { x1 = cx; y1 = cy; }
    if (b < CAM.near) { x2 = cx; y2 = cy; }
    return `M${project(x1, y1)}L${project(x2, y2)}`;
}
function perspectiveGrid() {
    let minor = '', major = '';
    const n = 260;
    for (let i = -n; i <= n; i++) {
        const d = segment(i, -n, i, n) + segment(-n, i, n, i);
        if (i % 10) minor += d; else major += d;
    }
    return `<path d="${minor}" stroke="#8a919a" stroke-opacity=".2"/><path d="${major}" stroke="#7b7e88" stroke-opacity=".65"/>`;
}

function sphere(id, r, hx, hy, seam) {
    return `<defs>
        <radialGradient id="body-${id}" gradientUnits="userSpaceOnUse" cx="${-r * 0.36}" cy="${-r * 0.42}" r="${r * 1.5}">
            <stop offset="0" stop-color="#ffc0ff"/><stop offset=".4" stop-color="#fcb6fc"/><stop offset=".6" stop-color="#dba0dc"/><stop offset=".8" stop-color="#a076a3"/><stop offset="1" stop-color="#4c3850"/>
        </radialGradient>
        <radialGradient id="edge-${id}">
            <stop offset=".86" stop-color="#5a3a60" stop-opacity="0"/><stop offset=".96" stop-color="#5a3a60" stop-opacity=".3"/><stop offset="1" stop-color="#5a3a60" stop-opacity=".75"/>
        </radialGradient>
        <radialGradient id="glow-${id}">
            <stop offset=".6" stop-color="#fff"/><stop offset=".75" stop-color="#fff" stop-opacity=".7"/><stop offset="1" stop-color="#ffc8ff" stop-opacity="0"/>
        </radialGradient>
    </defs>
    <circle r="${r}" fill="url(#body-${id})"/>
    <g transform="scale(${r / 80})" fill="#fff" fill-opacity=".15">
        <path d="M-64 -22C-50 -85 50 -85 67 -20C40 -62 -36 -62 -64 -22z"/>
        <path d="M-38 -18C-32 -58 32 -58 46 -28L42 -10C20 -20 -16 -40 -38 -18z"/>
        <path d="M28 -14C34 -26 38 -38 36 -48M0 -38c18 0 32 6 46 17M-54 -36C-20 -74 30 -74 58 -38" fill="none" stroke="#a870ac" stroke-opacity=".25"/>
    </g>
    <circle r="${r}" fill="url(#edge-${id})"/>
    <circle cx="${hx}" cy="${hy}" r="${r * 0.35}" fill="url(#glow-${id})"/>${seam}`;
}

const scenes = {
    top: () => orthoGrid() + '<path d="M0 0h600" stroke="#a34a4a" stroke-width="1.500"/><path d="M0 0v-400" stroke="#3f9a3f" stroke-width="1.500"/>' + sphere('top', 80, -12, -12, ''),
    front: () => orthoGrid() + '<path d="M0 0h600" stroke="#a34a4a" stroke-width="1.500"/>' + sphere('front', 80, -12, -12, ''),
    right: () => orthoGrid() + '<path d="M0 0h600" stroke="#a34a4a" stroke-width="1.500"/><path d="M0 0v-400" stroke="#3f9a3f" stroke-width="1.500"/>' +
        sphere('right', 80, -12, -12, '<path d="M.5 40V79" stroke="#d79ada" fill="none"/><path d="M.5 -78v52" stroke="#c58ac8" stroke-opacity=".5"/><path d="M.5 -19v34" stroke="#e8a0e8" stroke-dasharray="2 7"/>'),
    perspective: () => perspectiveGrid() + `<path d="${segment(0, 0, 150, 0)}" stroke="#a34a4a" stroke-width="1.500"/><path d="${segment(0, 0, 0, 260)}" stroke="#3f9a3f" stroke-width="1.500"/>` +
        sphere('persp', 63, -10, -10, '<path d="M33 -42C50 -20 60 8 56 30" stroke="#efb0ef" fill="none"/>')
};

const axes = {
    xy: '<path d="M5.500 20V50.500H35"/><text x="8" y="20">y</text><text x="37" y="51">x</text>',
    xz: '<path d="M5.500 20V50.500H35"/><text x="8" y="20">z</text><text x="37" y="51">x</text>',
    yz: '<path d="M5.500 20V50.500H35"/><text x="8" y="20">z</text><text x="37" y="51">y</text>',
    '3d': '<path d="M5.500 24V50.500L32 58M5.500 50.500L20 38"/><text x="8" y="26">z</text><text x="22" y="38">y</text><text x="34" y="59">x</text>'
};

document.querySelectorAll('.viewport').forEach((v) => {
    v.insertAdjacentHTML('afterbegin',
        `<svg class="scene" viewBox="-304 -161 608 322" preserveAspectRatio="xMidYMid slice">${scenes[v.dataset.view]()}</svg>` +
        `<svg class="axes" width="56" height="66">${axes[v.dataset.axes]}</svg>`);
});
```
